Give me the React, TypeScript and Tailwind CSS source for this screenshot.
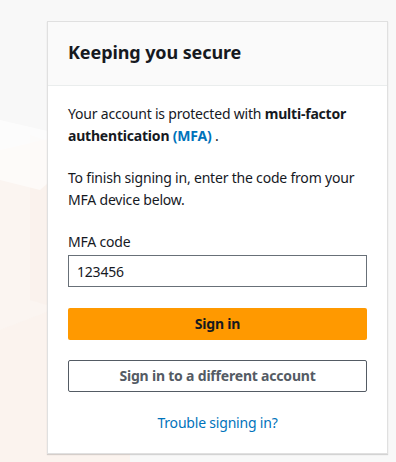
export default function App() {
  return (
    <div
      className="relative min-h-[462px] w-full overflow-hidden bg-[#f8f8f8] text-[#16191f]"
      style={{ fontFamily: '"Noto Sans", "Open Sans", Arial, sans-serif' }}
    >
      {/* faint background shapes */}
      <svg
        className="pointer-events-none absolute inset-0 h-full w-full"
        viewBox="0 0 396 462"
        preserveAspectRatio="none"
      >
        <polygon points="0,150 130,120 130,462 0,462" fill="#fbf5f1" />
        <polygon points="30,135 130,170 130,330 30,300" fill="#faece3" opacity="0.3" />
        <polygon points="0,330 130,280 130,462 0,462" fill="#fbf1eb" opacity="0.5" />
        <polygon points="0,120 95,142 40,190 0,180" fill="#ffffff" opacity="0.6" />
      </svg>

      <div className="relative flex justify-end pt-[21px] pr-[8px]">
        <div className="w-[341px] border border-[#e0e0e0] bg-white shadow-[0_1px_1px_rgba(0,0,0,0.15)]">
          {/* Header */}
          <div className="flex h-[64px] items-center border-b border-[#eaeded] bg-[#fafafa] px-5 pb-[4px]">
            <h1 className="text-[18px] font-bold leading-[22px] tracking-[-0.1px] text-[#16191f]">
              Keeping you secure
            </h1>
          </div>

          {/* Body */}
          <div className="px-5 pt-[17px] pb-[19px] text-[14px] leading-[22px] tracking-[-0.2px]">
            <p>
              Your account is protected with{" "}
              <b>multi-factor authentication </b>
              <b className="text-[#0073bb]">(MFA)</b> .
            </p>
            <p className="mt-[20px]">
              To finish signing in, enter the code from your MFA device below.
            </p>

            <label className="mt-[20px] block">MFA code</label>
            <input
              defaultValue="123456"
              className="mt-[2px] block h-[32px] w-full border border-[#687078] bg-white px-[8px] text-[14px] text-[#16191f] outline-none"
            />

            <button className="mt-[21px] block h-[32px] w-full rounded-[2px] bg-[#ff9900] text-[14px] font-bold text-[#16191f]">
              Sign in
            </button>

            <button className="mt-[20px] block h-[32px] w-full rounded-[2px] border border-[#545b64] bg-white text-[14px] font-bold text-[#545b64]">
              Sign in to a different account
            </button>

            <div className="mt-[20px] text-center">
              <a className="text-[#0073bb]" href="#">
                Trouble signing in?
              </a>
            </div>
          </div>
        </div>
      </div>
    </div>
  );
}
